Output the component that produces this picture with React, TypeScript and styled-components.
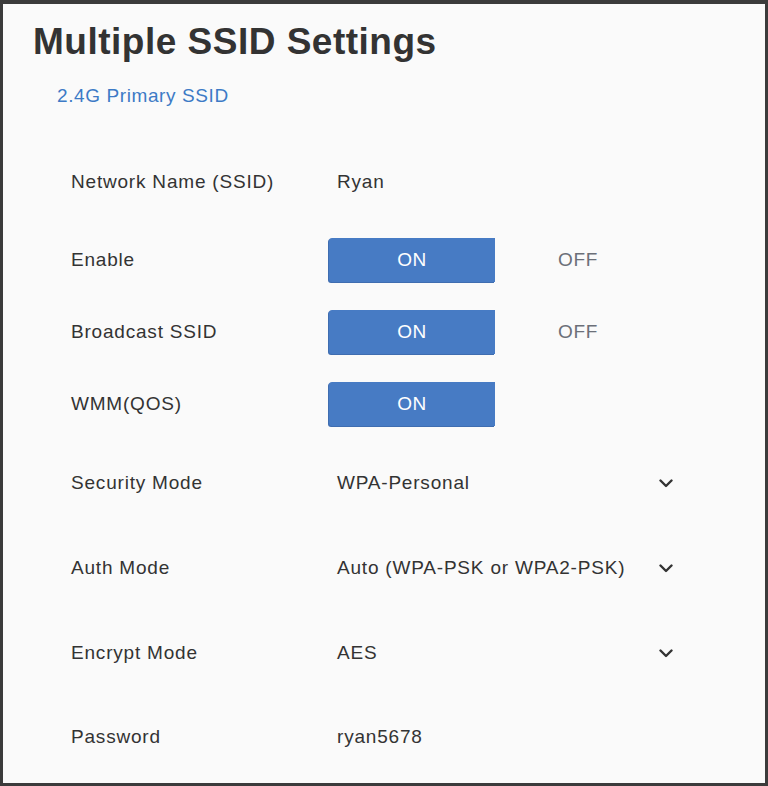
import React from "react";
import styled, { createGlobalStyle } from "styled-components";

const GlobalStyle = createGlobalStyle`
  html, body {
    margin: 0;
    padding: 0;
    background: #3b3b3b;
  }
  body {
    font-family: "Liberation Sans", Arial, sans-serif;
  }
  * { box-sizing: border-box; }
`;

const Frame = styled.div`
  height: 786px;
  border: 3px solid #3b3b3b;
  border-top-width: 4px;
  background: #fafafa;
  padding: 0 0 0 30px;
  overflow: hidden;
`;

const Title = styled.h1`
  margin: 0;
  padding-top: 16px;
  font-size: 37px;
  line-height: 44px;
  letter-spacing: 0.5px;
  font-weight: 700;
  color: #333333;
`;

const SubTitle = styled.div`
  margin: 21px 0 0 24px;
  font-size: 19px;
  line-height: 22px;
  letter-spacing: 0.6px;
  color: #3d7ac6;
`;

const Form = styled.div`
  display: flex;
  flex-direction: column;
  padding-left: 38px;
`;

const Row = styled.div<{ $space: number }>`
  display: grid;
  grid-template-columns: 258px 351px;
  align-items: center;
  height: 44px;
  margin-top: ${(p) => p.$space}px;
`;

const Label = styled.div`
  font-size: 19px;
  letter-spacing: 0.8px;
  color: #333333;
`;

const Value = styled.div`
  padding-left: 8px;
  font-size: 19px;
  letter-spacing: 0.8px;
  color: #333333;
`;

const ToggleGroup = styled.div`
  display: flex;
  align-items: center;
`;

const ToggleButton = styled.div<{ $active?: boolean }>`
  width: 166px;
  height: 44px;
  display: flex;
  align-items: center;
  justify-content: center;
  font-size: 19px;
  letter-spacing: 0.6px;
  border-radius: 3px 0 0 3px;
  color: ${(p) => (p.$active ? "#ffffff" : "#6b6f78")};
  background: ${(p) => (p.$active ? "#477bc4" : "transparent")};
  box-shadow: ${(p) => (p.$active ? "-1px 1px 0 #3f6db0" : "none")};
`;

const Select = styled.div`
  display: flex;
  align-items: center;
  justify-content: space-between;
  padding: 0 7px 0 8px;
  font-size: 19px;
  letter-spacing: 0.8px;
  color: #333333;
`;

const Chevron = () => (
  <svg width="14" height="9" viewBox="0 0 14 9">
    <polyline
      points="1.5,1.5 7,7 12.5,1.5"
      fill="none"
      stroke="#333"
      strokeWidth="2.4"
      strokeLinecap="round"
      strokeLinejoin="round"
    />
  </svg>
);

function Toggle({ off = true }: { off?: boolean }) {
  return (
    <ToggleGroup>
      <ToggleButton $active>ON</ToggleButton>
      {off && <ToggleButton>OFF</ToggleButton>}
    </ToggleGroup>
  );
}

export default function App() {
  return (
    <>
      <GlobalStyle />
      <Frame>
        <Title>Multiple SSID Settings</Title>
        <SubTitle>2.4G Primary SSID</SubTitle>
        <Form>
          <Row $space={53}>
            <Label>Network Name (SSID)</Label>
            <Value>Ryan</Value>
          </Row>
          <Row $space={34}>
            <Label>Enable</Label>
            <Toggle />
          </Row>
          <Row $space={28}>
            <Label>Broadcast SSID</Label>
            <Toggle />
          </Row>
          <Row $space={28}>
            <Label>WMM(QOS)</Label>
            <Toggle off={false} />
          </Row>
          <Row $space={35}>
            <Label>Security Mode</Label>
            <Select>
              WPA-Personal
              <Chevron />
            </Select>
          </Row>
          <Row $space={41}>
            <Label>Auth Mode</Label>
            <Select>
              Auto (WPA-PSK or WPA2-PSK)
              <Chevron />
            </Select>
          </Row>
          <Row $space={41}>
            <Label>Encrypt Mode</Label>
            <Select>
              AES
              <Chevron />
            </Select>
          </Row>
          <Row $space={40}>
            <Label>Password</Label>
            <Value>ryan5678</Value>
          </Row>
        </Form>
      </Frame>
    </>
  );
}
